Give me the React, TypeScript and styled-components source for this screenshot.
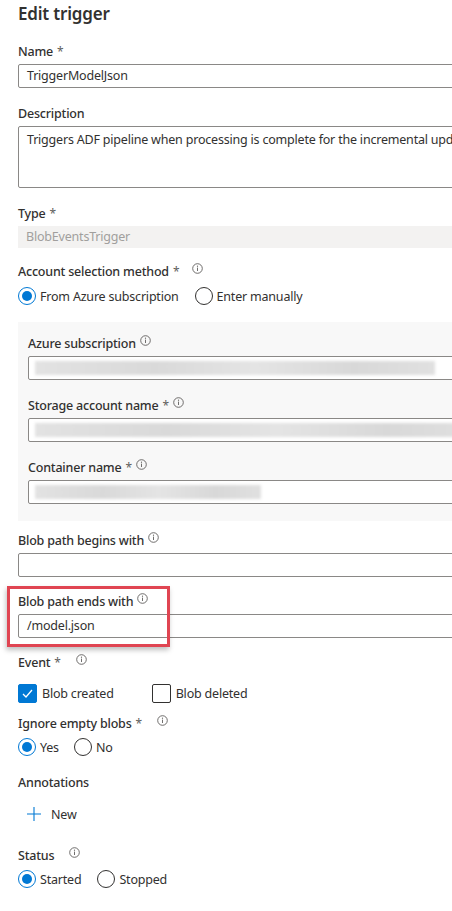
import React from 'react';
import styled, { createGlobalStyle } from 'styled-components';

const GlobalStyle = createGlobalStyle`
  html, body {
    margin: 0;
    padding: 0;
    background: #ffffff;
    overflow: hidden;
  }
  body {
    font-family: 'Segoe UI', 'Noto Sans', 'Open Sans', sans-serif;
    color: #323130;
    letter-spacing: -0.2px;
  }
`;

const InfoIcon: React.FC = () => (
  <InfoWrap>
    <svg width="11" height="11" viewBox="0 0 11 11">
      <circle cx="5.5" cy="5.5" r="4.8" fill="none" stroke="#605e5c" strokeWidth="0.9" />
      <line x1="5.5" y1="4.6" x2="5.5" y2="8" stroke="#605e5c" strokeWidth="0.9" />
      <circle cx="5.5" cy="3.2" r="0.6" fill="#605e5c" />
    </svg>
  </InfoWrap>
);

const Radio: React.FC<{ checked?: boolean; label: string }> = ({ checked, label }) => (
  <Option>
    <RadioCircle checked={checked}>{checked && <RadioDot />}</RadioCircle>
    <OptionText>{label}</OptionText>
  </Option>
);

const Check: React.FC<{ checked?: boolean; label: string }> = ({ checked, label }) => (
  <Option>
    <CheckBox checked={checked}>
      {checked && (
        <svg width="13" height="13" viewBox="0 0 13 13">
          <path d="M2 7 L5 10 L11 3" fill="none" stroke="#fff" strokeWidth="1.3" />
        </svg>
      )}
    </CheckBox>
    <OptionText>{label}</OptionText>
  </Option>
);

const App: React.FC = () => {
  return (
    <>
      <GlobalStyle />
      <Page>
        <Title>Edit trigger</Title>

        <Field gap={16}>
          <Label>Name <Req>*</Req></Label>
          <TextInput>TriggerModelJson</TextInput>
        </Field>

        <Field gap={16}>
          <Label>Description</Label>
          <TextArea>Triggers ADF pipeline when processing is complete for the incremental update</TextArea>
        </Field>

        <Field gap={14}>
          <Label>Type <Req>*</Req></Label>
          <ReadOnly>BlobEventsTrigger</ReadOnly>
        </Field>

        <Field gap={16}>
          <Label>Account selection method <Req>*</Req><Spacer w={9} /><InfoIcon /></Label>
          <OptionRow top={4} spacing={16}>
            <Radio checked label="From Azure subscription" />
            <Radio label="Enter manually" />
          </OptionRow>
        </Field>

        <Panel>
          <Field gap={16}>
            <Label>Azure subscription <InfoIcon /></Label>
            <TextInput><Blur w={400} /></TextInput>
          </Field>
          <Field gap={16}>
            <Label>Storage account name <Req>*</Req> <InfoIcon /></Label>
            <TextInput><Blur w={440} /></TextInput>
          </Field>
          <Field gap={0}>
            <Label>Container name <Req>*</Req> <InfoIcon /></Label>
            <TextInput><Blur w={226} /></TextInput>
          </Field>
        </Panel>

        <Field gap={15}>
          <Label>Blob path begins with <InfoIcon /></Label>
          <TextInput />
        </Field>

        <Field gap={15}>
          <Highlight />
          <Label>Blob path ends with <InfoIcon /></Label>
          <TextInput>/model.json</TextInput>
        </Field>

        <Field gap={11}>
          <Label>Event <Req>*</Req><Spacer w={11} /><InfoIcon /></Label>
          <OptionRow top={10} spacing={38}>
            <Check checked label="Blob created" />
            <Check label="Blob deleted" />
          </OptionRow>
        </Field>

        <Field gap={16}>
          <Label>Ignore empty blobs <Req>*</Req><Spacer w={11} /><InfoIcon /></Label>
          <OptionRow top={3} spacing={15}>
            <Radio checked label="Yes" />
            <Radio label="No" />
          </OptionRow>
        </Field>

        <Field gap={21}>
          <Label>Annotations</Label>
          <NewButton>
            <svg width="16" height="16" viewBox="0 0 16 16">
              <path d="M8 1 V15 M1 8 H15" stroke="#0078d4" strokeWidth="1.1" fill="none" />
            </svg>
            <span>New</span>
          </NewButton>
        </Field>

        <Field gap={0}>
          <Label>Status<Spacer w={11} /><InfoIcon /></Label>
          <OptionRow top={3} spacing={16}>
            <Radio checked label="Started" />
            <Radio label="Stopped" />
          </OptionRow>
        </Field>
      </Page>
    </>
  );
};

const Page = styled.div`
  width: 452px;
  height: 911px;
  overflow: hidden;
  padding: 0 0 0 18px;
  box-sizing: border-box;
  display: flex;
  flex-direction: column;
`;

const Title = styled.h1`
  font-size: 17px;
  font-weight: 600;
  line-height: 28px;
  margin: 0 0 14px 0;
  color: #323130;
`;

const Field = styled.div<{ gap: number }>`
  position: relative;
  display: flex;
  flex-direction: column;
  margin-bottom: ${p => p.gap}px;
`;

const Label = styled.div`
  display: flex;
  align-items: center;
  font-size: 12.5px;
  font-weight: 500;
  line-height: 20px;
  height: 20px;
  margin-bottom: 2px;
  color: #323130;
  white-space: nowrap;
`;

const Req = styled.span`
  color: #605e5c;
  font-weight: 400;
  font-size: 12px;
  margin-left: 4px;
  align-self: flex-start;
`;

const Spacer = styled.span<{ w: number }>`
  display: inline-block;
  width: ${p => p.w}px;
`;

const InfoWrap = styled.span`
  display: inline-flex;
  align-self: flex-start;
  margin-left: 4px;
  margin-top: 1px;
`;

const TextInput = styled.div`
  width: 480px;
  height: 24px;
  box-sizing: border-box;
  border: 1px solid #8a8886;
  border-radius: 2px;
  background: #ffffff;
  font-size: 12.5px;
  line-height: 22px;
  padding: 0 8px;
  display: flex;
  align-items: center;
  color: #323130;
  white-space: nowrap;
  overflow: hidden;
`;

const TextArea = styled.div`
  width: 480px;
  height: 62px;
  box-sizing: border-box;
  border: 1px solid #8a8886;
  border-radius: 2px;
  font-size: 12.5px;
  line-height: 20px;
  padding: 3px 8px;
  color: #323130;
  white-space: normal;
  overflow: hidden;
`;

const ReadOnly = styled.div`
  width: 480px;
  height: 22px;
  background: #f3f2f1;
  color: #a19f9d;
  font-size: 12.5px;
  line-height: 22px;
  padding: 0 8px;
  box-sizing: border-box;
`;

const OptionRow = styled.div<{ top: number; spacing: number }>`
  display: flex;
  align-items: center;
  gap: ${p => p.spacing}px;
  margin-top: ${p => p.top - 2}px;
  height: 20px;
`;

const Option = styled.label`
  display: flex;
  align-items: center;
  gap: 4px;
`;

const OptionText = styled.span`
  font-size: 12.5px;
  color: #323130;
`;

const RadioCircle = styled.span<{ checked?: boolean }>`
  width: 18px;
  height: 18px;
  box-sizing: border-box;
  border-radius: 50%;
  border: 1px solid ${p => (p.checked ? '#0078d4' : '#323130')};
  display: flex;
  align-items: center;
  justify-content: center;
`;

const RadioDot = styled.span`
  width: 10px;
  height: 10px;
  border-radius: 50%;
  background: #0078d4;
`;

const CheckBox = styled.span<{ checked?: boolean }>`
  width: 19px;
  height: 19px;
  box-sizing: border-box;
  border-radius: 2px;
  border: 1px solid ${p => (p.checked ? '#0078d4' : '#323130')};
  background: ${p => (p.checked ? '#0078d4' : '#ffffff')};
  display: flex;
  align-items: center;
  justify-content: center;
  margin-right: 1px;
`;

const Panel = styled.div`
  width: 480px;
  background: #f8f8f8;
  padding: 12px 10px 17px 10px;
  box-sizing: border-box;
  margin-bottom: 10px;
  display: flex;
  flex-direction: column;
`;

const Blur = styled.span<{ w: number }>`
  display: block;
  width: ${p => p.w}px;
  height: 14px;
  margin-left: -2px;
  background: linear-gradient(90deg, #e2e2e2, #d9d9d9 30%, #e4e4e4 55%, #d8d8d8 80%, #e0e0e0);
  filter: blur(1.5px);
`;

const Highlight = styled.div`
  position: absolute;
  left: -11px;
  top: -6px;
  width: 163px;
  height: 61px;
  border: 3px solid #e04552;
  box-sizing: border-box;
  box-shadow: -1px 3px 5px rgba(0, 0, 0, 0.25);
  pointer-events: none;
  z-index: 1;
`;

const NewButton = styled.div`
  display: flex;
  align-items: center;
  gap: 9px;
  margin-top: 8px;
  padding-left: 8px;
  height: 22px;
  font-size: 12.5px;
  color: #323130;
`;

export default App;
